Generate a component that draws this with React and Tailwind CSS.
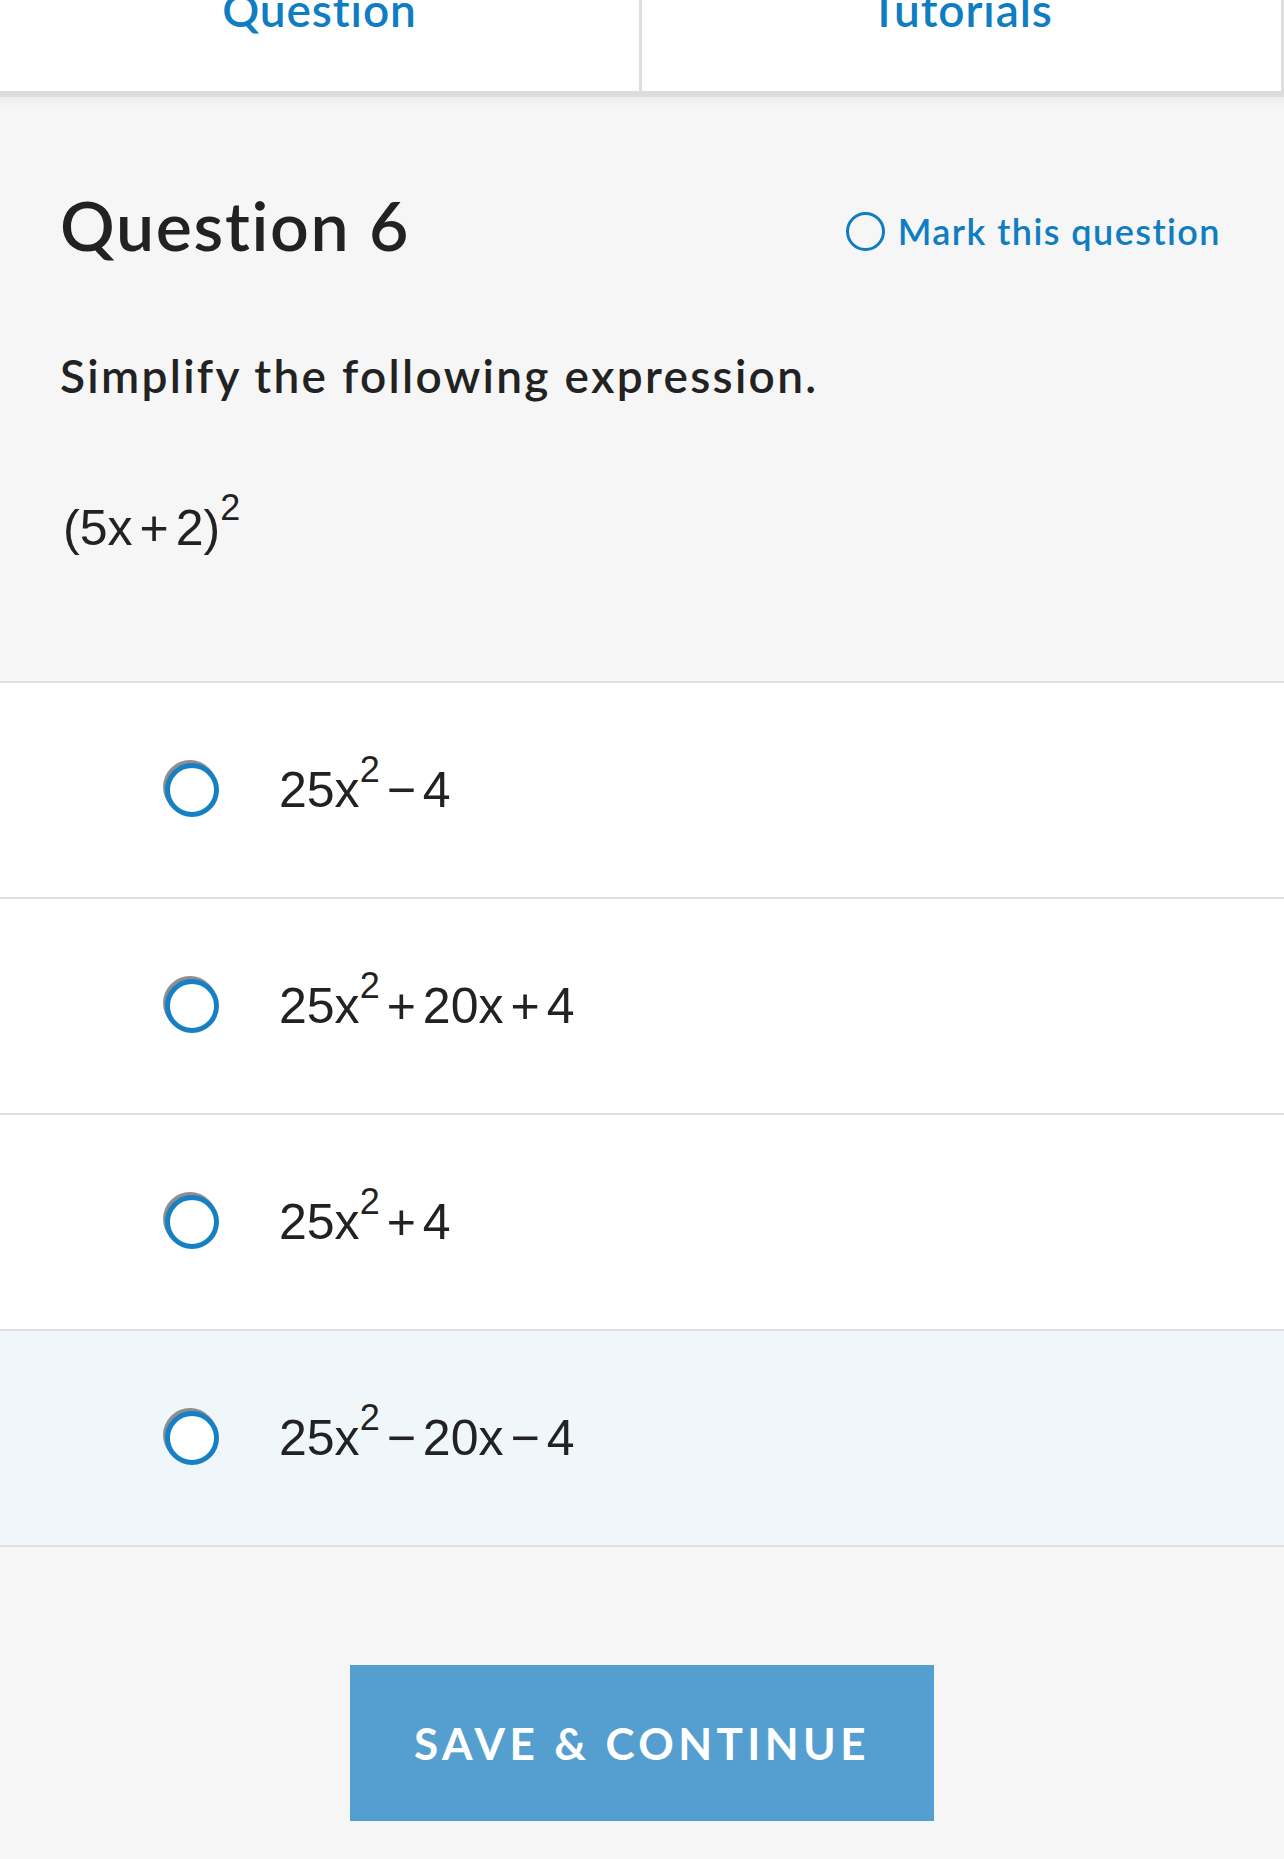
function Radio() {
  return (
    <span
      className="
        block
        w-[54px]
        h-[54px]
        shrink-0
        rounded-full
        border-[5px]
        border-[#1580c4]
        bg-white
        shadow-[-2px_-3px_0_#8e8e8e]
      "
    />
  );
}

function Op({ children }) {
  return <span className="mx-[7px]">{children}</span>;
}

function Sup({ children }) {
  return (
    <span className="relative top-[-25px] text-[36px]">
      {children}
    </span>
  );
}

const options = [
  { id: 1, expr: <>25x<Sup>2</Sup><Op>−</Op>4</> },
  { id: 2, expr: <>25x<Sup>2</Sup><Op>+</Op>20x<Op>+</Op>4</> },
  { id: 3, expr: <>25x<Sup>2</Sup><Op>+</Op>4</> },
  { id: 4, expr: <>25x<Sup>2</Sup><Op>−</Op>20x<Op>−</Op>4</>, hover: true },
];

export default function App() {
  return (
    <div
      className="w-full min-h-[1859px] bg-[#f6f6f6] text-[#222]"
      style={{ fontFamily: "Lato, 'Liberation Sans', sans-serif" }}
    >
      {/* tabs */}
      <div className="flex h-[97px] bg-white border-b-[6px] border-[#dcdcdc] overflow-hidden">
        <div className="w-[642px] border-r-[3px] border-[#dedede] text-center">
          <div className="mt-[-13px] text-[46px] leading-none font-semibold tracking-[0.02em] text-[#0f7dc2]">
            Question
          </div>
        </div>
        <div className="flex-1 border-r-[3px] border-[#dedede] text-center">
          <div className="mt-[-13px] text-[46px] leading-none font-semibold tracking-[0.02em] text-[#0f7dc2]">
            Tutorials
          </div>
        </div>
      </div>
      <div className="h-[11px] bg-gradient-to-b from-[#eeeeee] to-[#f6f6f6]" />

      {/* question */}
      <div className="pl-[60px] pr-[63px] pt-[83px] pb-[128px]">
        <div className="flex items-center justify-between">
          <h1 className="text-[68px] leading-none font-semibold tracking-[0.025em]">
            Question 6
          </h1>
          <button className="mt-[12px] flex items-center gap-[13px] text-[36px] leading-none font-semibold tracking-[0.04em] text-[#0f7dc2]">
            <span className="block w-[39px] h-[39px] rounded-full border-[3px] border-[#0f7dc2]" />
            Mark this question
          </button>
        </div>

        <p className="mt-[94px] text-[46px] leading-none font-semibold tracking-[0.05em]">
          Simplify the following expression.
        </p>

        <div
          className="mt-[104px] ml-[3px] text-[50px] leading-none text-[#222]"
          style={{ fontFamily: "'Liberation Sans', Arial, sans-serif" }}
        >
          (5x<Op>+</Op>2)<Sup>2</Sup>
        </div>
      </div>

      {/* answers */}
      <div className="border-b-2 border-[#dfe0e4]">
        {options.map((opt) => (
          <div
            key={opt.id}
            className={
              "flex items-center h-[216px] border-t-2 border-[#dfe0e4] pl-[165px] " +
              (opt.hover ? "bg-[#f0f7fb]" : "bg-white")
            }
          >
            <Radio />
            <span
              className="ml-[60px] text-[50px] leading-none text-[#222]"
              style={{ fontFamily: "'Liberation Sans', Arial, sans-serif" }}
            >
              {opt.expr}
            </span>
          </div>
        ))}
      </div>

      {/* footer */}
      <div className="flex justify-center pt-[118px] pb-[36px]">
        <button className="w-[584px] h-[156px] bg-[#549fd0] text-white text-[44px] font-bold tracking-[0.1em]">
          SAVE &amp; CONTINUE
        </button>
      </div>
    </div>
  );
}
